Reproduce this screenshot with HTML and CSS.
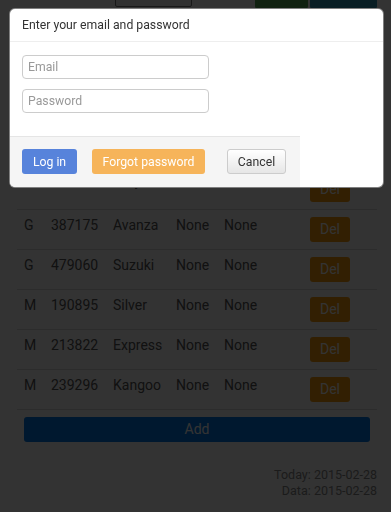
FILE: index.html
```html
<!DOCTYPE html>
<html lang="en">
<head>
    <meta charset="UTF-8">
    <meta name="viewport" content="width=device-width, initial-scale=1.0">
    <title>Vehicles</title>
    <link rel="stylesheet" href="styles.css">
</head>
<body>
    <div class="page">
        <div class="toolbar">
            <div class="search"></div>
            <span class="hint"></span>
            <button class="btn btn-green"></button>
            <button class="btn btn-blue"></button>
        </div>
        <table class="cars">
            <tr><td>T</td><td>Plate</td><td>Model</td><td>Info</td><td>Note</td><td class="act"></td></tr>
            <tr><td>G</td><td>101522</td><td>Corolla</td><td>None</td><td>None</td><td class="act"><button class="del">Del</button></td></tr>
            <tr><td>G</td><td>118402</td><td>Civic</td><td>None</td><td>None</td><td class="act"><button class="del">Del</button></td></tr>
            <tr><td>G</td><td>240719</td><td>Jazz</td><td>None</td><td>None</td><td class="act"><button class="del">Del</button></td></tr>
            <tr class="short"><td></td><td></td><td>Grey</td><td></td><td></td><td class="act"><button class="del">Del</button></td></tr>
            <tr><td>G</td><td>387175</td><td>Avanza</td><td>None</td><td>None</td><td class="act"><button class="del">Del</button></td></tr>
            <tr><td>G</td><td>479060</td><td>Suzuki</td><td>None</td><td>None</td><td class="act"><button class="del">Del</button></td></tr>
            <tr><td>M</td><td>190895</td><td>Silver</td><td>None</td><td>None</td><td class="act"><button class="del">Del</button></td></tr>
            <tr><td>M</td><td>213822</td><td>Express</td><td>None</td><td>None</td><td class="act"><button class="del">Del</button></td></tr>
            <tr><td>M</td><td>239296</td><td>Kangoo</td><td>None</td><td>None</td><td class="act"><button class="del">Del</button></td></tr>
        </table>
        <div class="add-wrap">
            <button class="add">Add</button>
        </div>
        <div class="dates">
            <div>Today: 2015-02-28</div>
            <div>Data: 2015-02-28</div>
        </div>
    </div>

    <div class="backdrop"></div>

    <div class="modal">
        <div class="modal-header">Enter your email and password</div>
        <div class="modal-body">
            <input type="email" placeholder="Email">
            <input type="password" placeholder="Password">
        </div>
        <div class="modal-footer">
            <button class="mbtn mbtn-login">Log in</button>
            <button class="mbtn mbtn-forgot">Forgot password</button>
            <button class="mbtn mbtn-cancel">Cancel</button>
        </div>
    </div>
</body>
</html>
```

FILE: styles.css
```css
body {
    margin: 0;
    background-color: #fff;
    font-family: Roboto, "Liberation Sans", sans-serif;
    font-size: 14px;
    color: #555;
    overflow: hidden;
}

.page {
    margin-top: -21px;
    padding: 0 14px 0 17px;
}

.toolbar {
    display: flex;
    align-items: flex-end;
    height: 30px;
}

.search {
    box-sizing: border-box;
    width: 77px;
    height: 26px;
    margin-left: 98px;
    margin-bottom: 2px;
    border: 1px solid #777;
    border-radius: 2px;
    background-color: #f5f5f5;
}

.hint {
    margin-left: 9px;
    width: 54px;
}

.btn {
    height: 28px;
    border: none;
    border-radius: 3px;
}

.btn-green {
    width: 53px;
    background-color: #51a351;
}

.btn-blue {
    width: 67px;
    margin-left: 2px;
    background-color: #2f96b4;
}

.cars {
    width: 360px;
    border-collapse: collapse;
    table-layout: fixed;
}

.cars td {
    height: 40px;
    padding: 5px 0 0 7px;
    vertical-align: top;
    border-bottom: 1px solid #ddd;
    line-height: 20px;
    box-sizing: border-box;
}

.cars tr.short td {
    padding-top: 1px;
}

.cars td:nth-child(1) { width: 27px; }
.cars td:nth-child(2) { width: 62px; }
.cars td:nth-child(3) { width: 63px; }
.cars td:nth-child(4) { width: 48px; }
.cars td:nth-child(5) { width: 86px; }

.cars td.act,
.cars tr.short td.act {
    padding-top: 7px;
}

.del {
    width: 40px;
    height: 25px;
    border: none;
    border-radius: 3px;
    background-color: #f79a0a;
    color: #fff;
    font-family: inherit;
    font-size: 14px;
}

.add-wrap {
    padding: 7px 7px 0;
}

.add {
    width: 100%;
    height: 25px;
    border: none;
    border-radius: 3px;
    background-color: #0078e8;
    color: #fff;
    font-family: inherit;
    font-size: 14px;
}

.dates {
    margin-top: 25px;
    text-align: right;
    font-size: 12.5px;
    line-height: 16px;
    color: #888;
}

.backdrop {
    position: fixed;
    top: 0;
    left: 0;
    right: 0;
    bottom: 0;
    background-color: rgba(0, 0, 0, 0.8);
}

.modal {
    position: absolute;
    top: 8px;
    left: 9px;
    width: 375px;
    box-sizing: border-box;
    background-color: #fff;
    border: 1px solid rgba(0, 0, 0, 0.5);
    border-radius: 6px;
    overflow: hidden;
    color: #333;
    font-size: 12.25px;
}

.modal-header {
    height: 33px;
    padding: 6px 12px 0;
    box-sizing: border-box;
    line-height: 20px;
    border-bottom: 1px solid #eee;
}

.modal-body {
    display: flex;
    flex-direction: column;
    align-items: flex-start;
    gap: 10px;
    padding: 13px 12px 23px;
}

.modal-body input {
    box-sizing: border-box;
    width: 187px;
    height: 24px;
    padding: 2px 5px;
    border: 1px solid #ccc;
    border-radius: 4px;
    font-family: inherit;
    font-size: 12.25px;
    color: #555;
}

.modal-body input::placeholder {
    color: #999;
}

.modal-footer {
    display: flex;
    width: 290px;
    box-sizing: border-box;
    padding: 12px 12px 13px;
    background-color: #f5f5f5;
    border-top: 1px solid #e5e5e5;
}

.mbtn {
    height: 25px;
    padding: 0;
    border: none;
    border-radius: 3px;
    font-family: inherit;
    font-size: 12.25px;
    color: #fff;
}

.mbtn-login {
    width: 55px;
    background-color: #5783db;
}

.mbtn-forgot {
    width: 113px;
    margin-left: 15px;
    background-color: #f6b45a;
}

.mbtn-cancel {
    width: 59px;
    margin-left: 22px;
    color: #333;
    border: 1px solid #ccc;
    background: linear-gradient(#fff, #e6e6e6);
}
```
